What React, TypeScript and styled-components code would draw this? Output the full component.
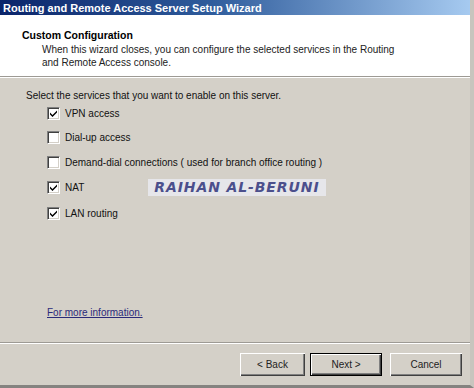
import React from "react";
import styled, { createGlobalStyle } from "styled-components";

const Global = createGlobalStyle`
  html, body { margin: 0; padding: 0; background: #d4d0c8; }
  body { font-family: "Liberation Sans", Arial, sans-serif; }
`;

const Window = styled.div`
  width: 474px;
  height: 388px;
  display: flex;
  flex-direction: column;
  background: #d4d0c8;
  box-sizing: border-box;
  border-right: 4px solid #c8c5be;
  border-bottom: 3px solid #858380;
  overflow: hidden;
`;

const TitleBar = styled.div`
  height: 15px;
  flex: none;
  display: flex;
  align-items: center;
  padding-left: 3px;
  background: linear-gradient(90deg, #0a246a 0%, #2f5c9c 45%, #a6caf0 100%);
  color: #fff;
  font-weight: bold;
  font-size: 11px;
  white-space: nowrap;
`;

const Header = styled.div`
  height: 62px;
  flex: none;
  background: #fff;
  padding: 14px 0 0 22px;
  box-sizing: border-box;
  border-bottom: 1px solid #9d9a94;
  box-shadow: 0 1px 0 #fff;
`;

const HeaderTitle = styled.div`
  font-weight: bold;
  font-size: 10.5px;
  color: #000;
`;

const HeaderText = styled.div`
  margin: 2px 0 0 20px;
  font-size: 10px;
  line-height: 13px;
  color: #222;
  width: 365px;
`;

const Body = styled.div`
  flex: 1;
  display: flex;
  flex-direction: column;
  padding: 12px 0 0 26px;
  margin-top: 1px;
  font-size: 10px;
  color: #111;
`;

const Prompt = styled.div`
  margin-bottom: 1px;
`;

const OptionList = styled.div`
  display: flex;
  flex-direction: column;
  padding-left: 21px;
`;

const Row = styled.div<{ $h: number }>`
  height: ${(p) => p.$h}px;
  display: flex;
  align-items: center;
  gap: 5px;
`;

const Box = styled.span`
  width: 13px;
  height: 13px;
  box-sizing: border-box;
  background: #fff;
  border-top: 1px solid #808080;
  border-left: 1px solid #808080;
  border-bottom: 1px solid #fff;
  border-right: 1px solid #fff;
  box-shadow: inset 1px 1px 0 #404040, inset -1px -1px 0 #d4d0c8;
  display: flex;
  align-items: center;
  justify-content: center;
`;

const Watermark = styled.span`
  margin-left: 59px;
  background: #e6e6ea;
  color: #4b4f8c;
  font-family: "DejaVu Sans", sans-serif;
  font-weight: bold;
  font-style: italic;
  font-size: 14px;
  line-height: 17px;
  letter-spacing: 0.9px;
  padding: 0 6px;
`;

const Spacer = styled.div`
  flex: 1;
`;

const InfoLink = styled.a`
  margin: 0 0 24px 21px;
  color: #2a2a7a;
  text-decoration: underline;
  font-size: 10px;
  cursor: pointer;
`;

const Footer = styled.div`
  flex: none;
  height: 43px;
  border-top: 1px solid #9d9a94;
  box-shadow: inset 0 1px 0 #fff;
  display: flex;
  justify-content: flex-end;
  align-items: flex-start;
  padding: 10px 8px 0 0;
  box-sizing: border-box;
  gap: 5px;
`;

const Button = styled.button<{ $default?: boolean; $w: number; $gap?: number }>`
  width: ${(p) => p.$w}px;
  height: 23px;
  font-family: "Liberation Sans", Arial, sans-serif;
  font-size: 10px;
  color: #222;
  background: #d4d0c8;
  border: ${(p) => (p.$default ? "1px solid #000" : "none")};
  box-shadow: inset 1px 1px 0 #fff, inset -1px -1px 0 #404040,
    inset -2px -2px 0 #808080;
  padding: 0;
  margin-left: ${(p) => p.$gap ?? 0}px;
`;

const Check = () => (
  <svg width="9" height="9" viewBox="0 0 9 9">
    <path d="M1 3.5 L3.5 6 L8 1.5 L8 3.5 L3.5 8 L1 5.5 Z" fill="#000" />
  </svg>
);

const options = [
  { label: "VPN access", checked: true, h: 23 },
  { label: "Dial-up access", checked: false, h: 24 },
  { label: "Demand-dial connections ( used for branch office routing )", checked: false, h: 26 },
  { label: "NAT", checked: true, h: 25, mark: true },
  { label: "LAN routing", checked: true, h: 26 },
];

export default function App() {
  return (
    <Window>
      <Global />
      <TitleBar>Routing and Remote Access Server Setup Wizard</TitleBar>
      <Header>
        <HeaderTitle>Custom Configuration</HeaderTitle>
        <HeaderText>
          When this wizard closes, you can configure the selected services in the Routing
          and Remote Access console.
        </HeaderText>
      </Header>
      <Body>
        <Prompt>Select the services that you want to enable on this server.</Prompt>
        <OptionList>
          {options.map((o) => (
            <Row key={o.label} $h={o.h}>
              <Box>{o.checked && <Check />}</Box>
              <span>{o.label}</span>
              {o.mark && <Watermark>RAIHAN AL-BERUNI</Watermark>}
            </Row>
          ))}
        </OptionList>
        <Spacer />
        <InfoLink>For more information.</InfoLink>
      </Body>
      <Footer>
        <Button $w={65}>&lt; Back</Button>
        <Button $w={72} $default>Next &gt;</Button>
        <Button $w={72} $gap={3}>Cancel</Button>
      </Footer>
    </Window>
  );
}
